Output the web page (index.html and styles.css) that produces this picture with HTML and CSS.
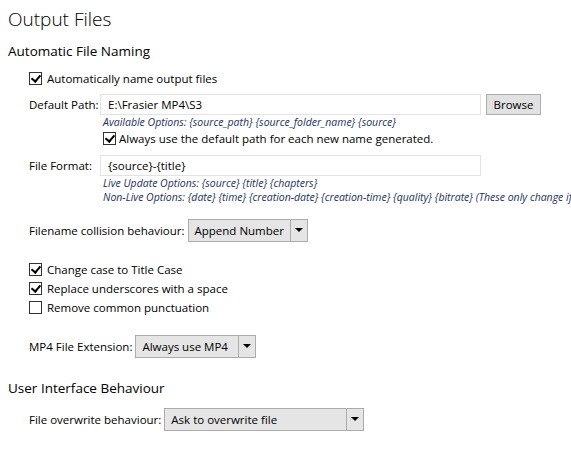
FILE: index.html
```html
<!DOCTYPE html>
<html lang="en">
<head>
  <meta charset="UTF-8">
  <title>Output Files</title>
  <link rel="stylesheet" href="styles.css">
</head>
<body>
  <div class="painel">
    <h1 class="titulo">Output Files</h1>

    <h2 class="secao">Automatic File Naming</h2>

    <label class="check topo"><span class="caixa marcada"></span>Automatically name output files</label>

    <div class="linha caminho">
      <span class="rotulo">Default Path:</span>
      <div class="campo">E:\Frasier MP4\S3</div>
      <button class="botao">Browse</button>
    </div>
    <div class="bloco">
      <div class="dica">Available Options: {source_path} {source_folder_name} {source}</div>
      <label class="check"><span class="caixa marcada"></span>Always use the default path for each new name generated.</label>
    </div>

    <div class="linha formato">
      <span class="rotulo">File Format:</span>
      <div class="campo">{source}-{title}</div>
    </div>
    <div class="bloco">
      <div class="dica">Live Update Options: {source} {title} {chapters}</div>
      <div class="dica">Non-Live Options: {date} {time} {creation-date} {creation-time} {quality} {bitrate} (These only change if you scan a new source)</div>
    </div>

    <div class="linha colisao">
      <span class="rotulo">Filename collision behaviour:</span>
      <div class="combo w-colisao"><span class="valor">Append Number</span><span class="seta"></span></div>
    </div>

    <div class="grupo">
      <label class="check"><span class="caixa marcada"></span>Change case to Title Case</label>
      <label class="check"><span class="caixa marcada"></span>Replace underscores with a space</label>
      <label class="check"><span class="caixa"></span>Remove common punctuation</label>
    </div>

    <div class="linha mp4">
      <span class="rotulo">MP4 File Extension:</span>
      <div class="combo w-mp4"><span class="valor">Always use MP4</span><span class="seta"></span></div>
    </div>

    <h2 class="secao ui">User Interface Behaviour</h2>

    <div class="linha sobrescrever">
      <span class="rotulo">File overwrite behaviour:</span>
      <div class="combo w-sobre"><span class="valor">Ask to overwrite file</span><span class="seta"></span></div>
    </div>
  </div>
</body>
</html>
```

FILE: styles.css
```css
/* RESET */
* {
  margin: 0;
  padding: 0;
  box-sizing: border-box;
}

body {
  font-family: 'Open Sans', 'Segoe UI', sans-serif;
  font-size: 11.5px;
  color: #000;
  background: #fff;
  width: 571px;
  height: 450px;
  overflow: hidden;
}

.painel {
  padding: 6px 0 0 8px;
  white-space: nowrap;
  overflow: hidden;
}

.titulo {
  font-size: 19px;
  font-weight: 300;
  line-height: 26px;
  color: #000;
}

.secao {
  font-size: 13.5px;
  font-weight: normal;
  line-height: 20px;
  margin-top: 9px;
}

.secao.ui {
  margin-top: 20px;
}

/* checkboxes */
.check {
  display: flex;
  align-items: center;
  height: 19px;
  gap: 5px;
}

.check.topo {
  margin: 8px 0 0 21px;
}

.caixa {
  width: 13px;
  height: 13px;
  border: 1px solid #333;
  background: #fff;
  position: relative;
  flex: none;
}

.caixa.marcada::after {
  content: '';
  position: absolute;
  left: 3px;
  top: 0px;
  width: 4px;
  height: 7px;
  border: solid #000;
  border-width: 0 2px 2px 0;
  transform: rotate(40deg);
}

/* linhas com rotulo */
.linha {
  display: flex;
  align-items: center;
  margin-left: 21px;
}

.rotulo {
  width: 71px;
}

.caminho { margin-top: 6px; }
.formato { margin-top: 7px; }
.colisao { margin-top: 15px; }
.mp4 { margin-top: 18px; }
.sobrescrever { margin-top: 10px; }

.colisao .rotulo,
.mp4 .rotulo,
.sobrescrever .rotulo {
  width: auto;
  margin-right: 3px;
}

.campo {
  width: 381px;
  height: 21px;
  border: 1px solid #e3e3e3;
  padding: 0 7px;
  line-height: 19px;
}

.botao {
  width: 55px;
  height: 21px;
  margin-left: 5px;
  font: inherit;
  background: #e1e1e1;
  border: 1px solid #adadad;
  color: #000;
}

.bloco {
  margin-left: 95px;
}

.dica {
  font-size: 10.5px;
  font-style: italic;
  color: #1b325e;
  line-height: 14px;
}

.bloco .check {
  gap: 3px;
}

/* combobox */
.combo {
  display: flex;
  height: 23px;
  background: #e5e5e5;
  border: 1px solid #acacac;
}

.combo .valor {
  flex: 1;
  padding-left: 6px;
  line-height: 21px;
}

.combo .seta {
  width: 17px;
  flex: none;
  border-left: 1px solid #acacac;
  position: relative;
}

.combo .seta::after {
  content: '';
  position: absolute;
  left: 4px;
  top: 8px;
  border-left: 4px solid transparent;
  border-right: 4px solid transparent;
  border-top: 4px solid #000;
}

.w-colisao { width: 120px; }
.w-mp4 { width: 121px; }
.w-sobre { width: 200px; }

.grupo {
  margin: 18px 0 0 21px;
}
```
